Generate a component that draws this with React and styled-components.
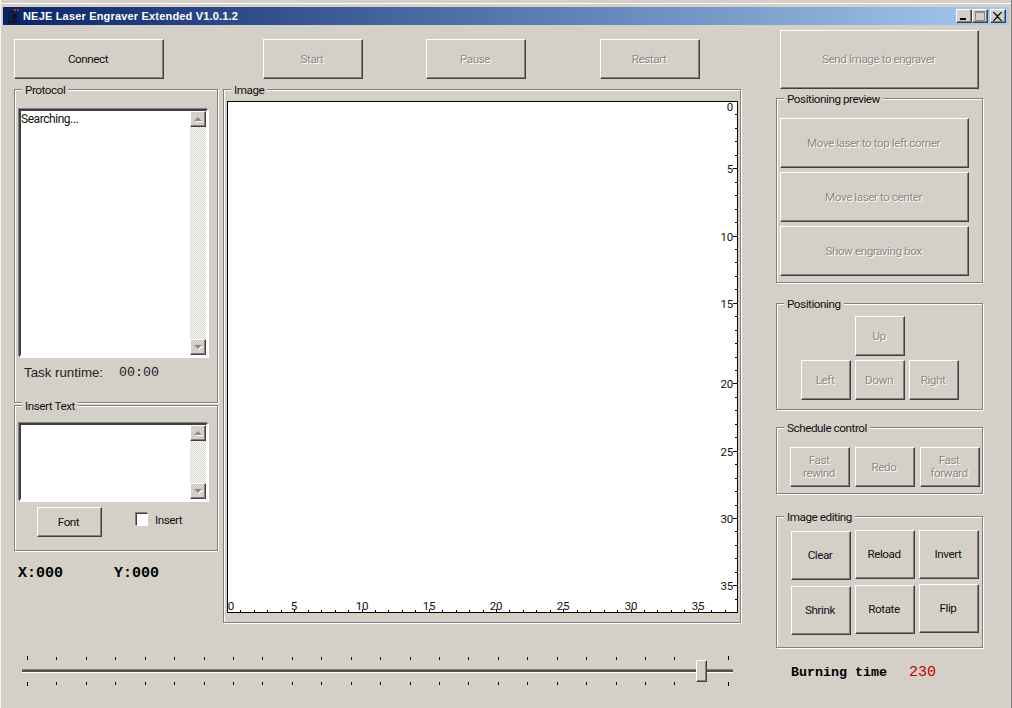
import React from 'react';
import styled, { createGlobalStyle } from 'styled-components';

const GlobalStyle = createGlobalStyle`
  html, body {
    margin: 0;
    padding: 0;
    background: #d4d0c8;
    overflow: hidden;
  }
  * {
    box-sizing: border-box;
  }
`;

const Window = styled.div`
  width: 1012px;
  height: 708px;
  padding-top: 7px;
  background: #d4d0c8;
  border-left: 1px solid #f4f3f0;
  border-right: 1px solid #808080;
  font-family: Roboto, "Liberation Sans", Arial, sans-serif;
  font-size: 11.7px;
  letter-spacing: -0.45px;
  color: #111;
  position: relative;

  &::before {
    content: "";
    position: absolute;
    left: 0;
    right: 0;
    top: 3px;
    height: 1px;
    background: #fff;
  }
`;

const TitleBar = styled.div`
  height: 18px;
  margin: 0 2px 0 2px;
  display: flex;
  align-items: center;
  padding: 0 3px 0 2px;
  background: linear-gradient(90deg, #0a246a 0%, #a6caf0 100%);
`;

const TitleText = styled.span`
  margin-left: 2px;
  color: #fff;
  font-family: "Liberation Sans", Arial, sans-serif;
  font-size: 11px;
  font-weight: bold;
  letter-spacing: 0.18px;
`;

const TitleButtons = styled.div`
  margin-left: auto;
  display: flex;
`;

const CaptionButton = styled.div`
  width: 16px;
  height: 14px;
  margin-left: ${(p) => p.$gap || 0}px;
  background: #d4d0c8;
  border: 1px solid;
  border-color: #fff #404040 #404040 #fff;
  box-shadow: inset -1px -1px 0 #808080;
  display: flex;
  align-items: center;
  justify-content: center;
`;

const Main = styled.div`
  display: flex;
  padding: 5px 0 0 13px;
`;

const LeftArea = styled.div`
  width: 727px;
  display: flex;
  flex-direction: column;
`;

const RightArea = styled.div`
  width: 207px;
  margin-left: 35px;
  display: flex;
  flex-direction: column;
`;

const Toolbar = styled.div`
  display: flex;
  margin-top: 9px;
`;

const Button = styled.button`
  width: ${(p) => p.$w}px;
  height: ${(p) => p.$h}px;
  margin: 0;
  margin-left: ${(p) => p.$left || 0}px;
  padding: 0 2px 0 0;
  flex: none;
  background: #d4d0c8;
  border: 1px solid;
  border-color: #fff #404040 #404040 #fff;
  box-shadow: inset -1px -1px 0 #808080;
  font-family: inherit;
  font-size: 11.7px;
  letter-spacing: inherit;
  line-height: 13px;
  color: #111;

  &:disabled {
    color: #8c8a85;
    text-shadow: 1px 1px 0 #fff;
  }
`;

const Panels = styled.div`
  display: flex;
  gap: 5px;
  margin-top: 10px;
`;

const LeftColumn = styled.div`
  width: 204px;
  display: flex;
  flex-direction: column;
`;

const Group = styled.div`
  position: relative;
  width: ${(p) => p.$w || 207}px;
  height: ${(p) => p.$h}px;
  margin-top: ${(p) => p.$top || 0}px;
  padding: ${(p) => p.$pad};
  border: 1px solid #808080;
  box-shadow: 1px 1px 0 #fff, inset 1px 1px 0 #fff;
`;

const GroupTitle = styled.span`
  position: absolute;
  top: -6px;
  left: 7px;
  padding: 0 3px;
  background: #d4d0c8;
  line-height: 13px;
  white-space: nowrap;
`;

const TextBox = styled.div`
  width: 189px;
  height: ${(p) => p.$h}px;
  display: flex;
  background: #fff;
  border: 2px solid;
  border-color: #404040 #fff #fff #404040;
  box-shadow: -1px -1px 0 #808080, 1px 1px 0 #fff;
`;

const TextContent = styled.div`
  flex: 1;
  padding: 1px 0 0 0;
  font-size: 12px;
  line-height: 14px;
`;

const ScrollBar = styled.div`
  width: 16px;
  display: flex;
  flex-direction: column;
  justify-content: space-between;
  background: repeating-conic-gradient(#d4d0c8 0 25%, #fff 0 50%) 0 0 / 2px 2px;
`;

const ScrollButton = styled.div`
  height: 16px;
  background: #d4d0c8;
  border: 1px solid;
  border-color: #fff #404040 #404040 #fff;
  box-shadow: inset -1px -1px 0 #808080;
  display: flex;
  align-items: center;
  justify-content: center;
`;

const Arrow = styled.span`
  width: 0;
  height: 0;
  border-left: 4px solid transparent;
  border-right: 4px solid transparent;
  ${(p) => (p.$down ? 'border-top: 4px solid #8c8a85;' : 'border-bottom: 4px solid #8c8a85;')}
  filter: drop-shadow(1px 1px 0 #fff);
`;

const RuntimeRow = styled.div`
  display: flex;
  align-items: center;
  margin: 7px 0 0 5px;
  height: 16px;
  font-family: "Liberation Sans", Arial, sans-serif;
  font-size: 13.3px;
  letter-spacing: 0;
  color: #222;
`;

const RuntimeValue = styled.span`
  margin-left: 16px;
  font-family: "Liberation Mono", monospace;
  font-size: 13.3px;
`;

const InsertRow = styled.div`
  display: flex;
  margin-top: 6px;
`;

const CheckLabel = styled.label`
  display: flex;
  align-items: center;
  height: 13px;
  margin: 6px 0 0 34px;
  gap: 7px;
`;

const CheckBox = styled.span`
  width: 12px;
  height: 13px;
  background: #fff;
  border: 1px solid;
  border-color: #404040 #fff #fff #404040;
  box-shadow: -1px -1px 0 #808080;
`;

const Coordinates = styled.div`
  display: flex;
  gap: 51px;
  margin: 14px 0 0 4px;
  font-family: "Liberation Mono", monospace;
  font-size: 15px;
  font-weight: bold;
  letter-spacing: 0;
  line-height: 17px;
  color: #000;
`;

const Canvas = styled.svg`
  display: block;
  background: #fff;
`;

const AxisLabel = styled.text`
  font-family: Roboto, "Liberation Sans", Arial, sans-serif;
  font-size: 11.5px;
  letter-spacing: -0.2px;
  fill: #111;
`;

const SliderBox = styled.div`
  position: relative;
  width: 711px;
  height: 30px;
  margin: 33px 0 0 8px;
`;

const SliderTicks = styled.svg`
  display: block;
`;

const SliderTrack = styled.div`
  position: absolute;
  left: 0;
  right: 0;
  top: 13px;
  height: 4px;
  background: #55534f;
  border-top: 1px solid #808080;
  border-bottom: 1px solid #fff;
`;

const SliderThumb = styled.div`
  position: absolute;
  left: 674px;
  top: 4px;
  width: 11px;
  height: 22px;
  background: #d4d0c8;
  border: 1px solid;
  border-color: #fff #404040 #404040 #fff;
  box-shadow: inset -1px -1px 0 #808080;
`;

const PreviewList = styled.div`
  display: flex;
  flex-direction: column;
  gap: 4px;
`;

const PadGrid = styled.div`
  display: grid;
  grid-template-columns: repeat(3, 50px);
  grid-auto-rows: 40px;
  gap: 4px;
`;

const PadCell = styled.div`
  grid-column: ${(p) => p.$col};
`;

const ScheduleRow = styled.div`
  display: flex;
  gap: 5px;
`;

const EditGrid = styled.div`
  display: flex;
  gap: 4px;
`;

const EditColumn = styled.div`
  display: flex;
  flex-direction: column;
  gap: ${(p) => p.$gap}px;
  margin-top: ${(p) => p.$top}px;
`;

const BurningRow = styled.div`
  display: flex;
  align-items: center;
  height: 18px;
  margin: 15px 0 0 15px;
  font-family: "Liberation Mono", monospace;
  font-weight: bold;
  font-size: 13.33px;
  letter-spacing: 0;
  color: #000;
`;

const BurningValue = styled.span`
  margin-left: 22px;
  font-size: 15px;
  font-weight: normal;
  color: #c00000;
`;

const sideLabels = [
  [0, 0],
  [5, 5],
  [10, 10],
  [15, 15],
  [20, 21],
  [25, 26],
  [30, 31],
  [35, 36],
];

const rulerStep = 13.45;

function Ruler() {
  const sideTicks = Array.from({ length: 38 }, (_, i) => i);
  const bottomTicks = Array.from({ length: 38 }, (_, i) => i);
  const majors = sideLabels.map((l) => l[1]);

  return (
    <Canvas width="511" height="512" viewBox="0 0 511 512">
      <rect x="0" y="0" width="511" height="1" fill="#000" />
      <rect x="0" y="0" width="1" height="512" fill="#000" />
      <rect x="510" y="0" width="1" height="512" fill="#000" />
      <rect x="0" y="511" width="511" height="1" fill="#000" />
      {sideTicks.map((i) => {
        const y = Math.round(i * rulerStep);
        if (y > 506) return null;
        return <rect key={i} x={majors.includes(i) ? 506 : 508} y={y} width="5" height="1" fill="#000" />;
      })}
      {bottomTicks.map((i) => {
        const x = Math.round(i * rulerStep);
        if (x > 506) return null;
        return <rect key={i} x={x} y={i % 5 === 0 ? 508 : 509} width="1" height="3" fill="#000" />;
      })}
      {sideLabels.map(([label, i]) => (
        <AxisLabel key={label} x="506" y={Math.round(i * rulerStep) + (i === 0 ? 10 : 5)} textAnchor="end">
          {label}
        </AxisLabel>
      ))}
      {[0, 5, 10, 15, 20, 25, 30, 35].map((label) => (
        <AxisLabel key={label} x={label === 0 ? 4 : Math.round(label * rulerStep)} y="509" textAnchor="middle">
          {label}
        </AxisLabel>
      ))}
    </Canvas>
  );
}

function Ticks() {
  const ticks = Array.from({ length: 24 }, (_, i) => (i === 23 ? 706 : Math.round(5 + i * 29.43)));
  return (
    <SliderTicks width="711" height="30" viewBox="0 0 711 30">
      {ticks.map((x, i) => {
        const long = i === 0 || i === 23;
        return (
          <g key={i} fill="#000">
            <rect x={x} y={long ? 0 : 1} width="1" height={long ? 4 : 3} />
            <rect x={x} y="26" width="1" height={long ? 4 : 3} />
          </g>
        );
      })}
    </SliderTicks>
  );
}

function Scroll() {
  return (
    <ScrollBar>
      <ScrollButton>
        <Arrow />
      </ScrollButton>
      <ScrollButton>
        <Arrow $down />
      </ScrollButton>
    </ScrollBar>
  );
}

function AppIcon() {
  return (
    <svg width="16" height="16" viewBox="0 0 16 16">
      <rect width="16" height="16" fill="#0a246a" />
      <path d="M3 13V6a4 4 0 0 1 4-3h3v2H7a2 2 0 0 0-2 2v6z" fill="#1a1a2a" />
      <path d="M7 6h5v5H10v2h3v2H3v-2h5v-2H7z" fill="#14141e" />
      <rect x="9" y="1" width="2" height="2" fill="#e02030" />
      <rect x="12" y="1" width="2" height="2" fill="#e02030" />
    </svg>
  );
}

function App() {
  return (
    <Window>
      <GlobalStyle />
      <TitleBar>
        <AppIcon />
        <TitleText>NEJE Laser Engraver Extended V1.0.1.2</TitleText>
        <TitleButtons>
          <CaptionButton>
            <svg width="10" height="9" viewBox="0 0 10 9">
              <rect x="1" y="6" width="6" height="2" fill="#000" />
            </svg>
          </CaptionButton>
          <CaptionButton>
            <svg width="10" height="10" viewBox="0 0 10 10" fill="none">
              <rect x="0.5" y="0.5" width="9" height="9" stroke="#8c8a85" />
              <rect x="1" y="1" width="8" height="1" fill="#8c8a85" />
            </svg>
          </CaptionButton>
          <CaptionButton $gap={2}>
            <svg width="10" height="9" viewBox="0 0 10 9">
              <path d="M1 0l3.5 3.2L8 0h1.4L5.2 4.5 9.4 9H8L4.5 5.8 1 9H-.4l4.2-4.5L-.4 0z" fill="#000" />
            </svg>
          </CaptionButton>
        </TitleButtons>
      </TitleBar>

      <Main>
        <LeftArea>
          <Toolbar>
            <Button $w={150} $h={40}>Connect</Button>
            <Button $w={100} $h={40} $left={99} disabled>Start</Button>
            <Button $w={100} $h={40} $left={63} disabled>Pause</Button>
            <Button $w={100} $h={40} $left={74} disabled>Restart</Button>
          </Toolbar>

          <Panels>
            <LeftColumn>
              <Group $w={204} $h={314} $pad="19px 0 0 4px">
                <GroupTitle>Protocol</GroupTitle>
                <TextBox $h={248}>
                  <TextContent>Searching...</TextContent>
                  <Scroll />
                </TextBox>
                <RuntimeRow>
                  Task runtime:
                  <RuntimeValue>00:00</RuntimeValue>
                </RuntimeRow>
              </Group>
              <Group $w={204} $h={146} $top={2} $pad="17px 0 0 4px">
                <GroupTitle>Insert Text</GroupTitle>
                <TextBox $h={78}>
                  <TextContent />
                  <Scroll />
                </TextBox>
                <InsertRow>
                  <Button $w={65} $h={30} $left={18}>Font</Button>
                  <CheckLabel>
                    <CheckBox />
                    Insert
                  </CheckLabel>
                </InsertRow>
              </Group>
              <Coordinates>
                <span>X:000</span>
                <span>Y:000</span>
              </Coordinates>
            </LeftColumn>

            <Group $w={518} $h={534} $pad="11px 0 0 3px">
              <GroupTitle>Image</GroupTitle>
              <Ruler />
            </Group>
          </Panels>

          <SliderBox>
            <Ticks />
            <SliderTrack />
            <SliderThumb />
          </SliderBox>
        </LeftArea>

        <RightArea>
          <Button $w={199} $h={59} $left={4} disabled>Send Image to engraver</Button>

          <Group $h={185} $top={9} $pad="19px 0 0 3px">
            <GroupTitle>Positioning preview</GroupTitle>
            <PreviewList>
              <Button $w={189} $h={50} disabled>Move laser to top left corner</Button>
              <Button $w={189} $h={50} disabled>Move laser to center</Button>
              <Button $w={189} $h={50} disabled>Show engraving box</Button>
            </PreviewList>
          </Group>

          <Group $h={107} $top={20} $pad="12px 0 0 24px">
            <GroupTitle>Positioning</GroupTitle>
            <PadGrid>
              <PadCell $col={2}>
                <Button $w={50} $h={40} disabled>Up</Button>
              </PadCell>
              <PadCell $col={1}>
                <Button $w={50} $h={40} disabled>Left</Button>
              </PadCell>
              <PadCell $col={2}>
                <Button $w={50} $h={40} disabled>Down</Button>
              </PadCell>
              <PadCell $col={3}>
                <Button $w={50} $h={40} disabled>Right</Button>
              </PadCell>
            </PadGrid>
          </Group>

          <Group $h={67} $top={17} $pad="19px 0 0 13px">
            <GroupTitle>Schedule control</GroupTitle>
            <ScheduleRow>
              <Button $w={60} $h={40} disabled>Fast<br />rewind</Button>
              <Button $w={60} $h={40} disabled>Redo</Button>
              <Button $w={60} $h={40} disabled>Fast<br />forward</Button>
            </ScheduleRow>
          </Group>

          <Group $h={132} $top={22} $pad="13px 0 0 14px">
            <GroupTitle>Image editing</GroupTitle>
            <EditGrid>
              <EditColumn $top={1} $gap={6}>
                <Button $w={60} $h={49}>Clear</Button>
                <Button $w={60} $h={49}>Shrink</Button>
              </EditColumn>
              <EditColumn $top={0} $gap={6}>
                <Button $w={60} $h={49}>Reload</Button>
                <Button $w={60} $h={49}>Rotate</Button>
              </EditColumn>
              <EditColumn $top={0} $gap={5}>
                <Button $w={60} $h={49}>Invert</Button>
                <Button $w={60} $h={49}>Flip</Button>
              </EditColumn>
            </EditGrid>
          </Group>

          <BurningRow>
            Burning time
            <BurningValue>230</BurningValue>
          </BurningRow>
        </RightArea>
      </Main>
    </Window>
  );
}

export default App;
